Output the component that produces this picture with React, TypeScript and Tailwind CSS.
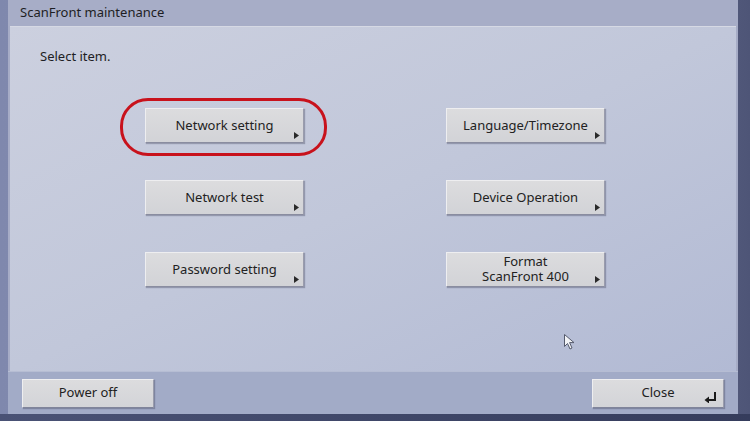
import React from "react";

const font = { fontFamily: '"Noto Sans", "Open Sans", Arial, sans-serif' };

function Tri() {
  return (
    <svg className="absolute right-[4px] bottom-[3px]" width="5" height="7" viewBox="0 0 5 7">
      <path d="M0 0 L5 3.5 L0 7 Z" fill="#2a2a2a" />
    </svg>
  );
}

function MenuButton({ children }: { children: React.ReactNode }) {
  return (
    <div className="relative w-[159px] h-[35px] bg-gradient-to-b from-[#dcdcde] to-[#d2d3d7] border-t border-l border-[#eeeef0] border-r border-b border-r-[#9a9cac] border-b-[#8a8da0] shadow-[1px_1px_1px_rgba(60,64,90,0.35)] flex items-center justify-center text-center text-[13px] leading-[15px] text-[#222]">
      <span>{children}</span>
      <Tri />
    </div>
  );
}

export default function App() {
  return (
    <div className="w-[750px] h-[421px] overflow-hidden bg-[#5d658a] flex flex-col" style={font}>
      <div className="flex flex-1 pl-[8px] pr-[12px] bg-gradient-to-r from-[#7f88ad] via-[#8f97b8] to-[#4e5577]">
        <div className="flex flex-col flex-1 bg-[#a6acc6]">
          <div className="h-[26px] flex items-center pl-[12px] text-[13px] text-[#1e1e24] bg-[#a7adc7]">
            ScanFront maintenance
          </div>
          <div className="relative flex-1 flex flex-col mx-[2px] border-t border-[#d6d9e4] bg-gradient-to-br from-[#ccd0df] via-[#c1c7da] to-[#b2bad4]">
            <div className="pl-[30px] pt-[20px] text-[13px] text-[#1e1e24]">Select item.</div>
            <div className="grid grid-cols-[159px_159px] gap-x-[142px] gap-y-[37px] pl-[135px] pt-[41px]">
              <div className="relative">
                <div className="absolute left-[-25px] top-[-10px] w-[207px] h-[58px] rounded-[28px] border-[3px] border-[#c8121c]" />
                <MenuButton>Network setting</MenuButton>
              </div>
              <MenuButton>Language/Timezone</MenuButton>
              <MenuButton>Network test</MenuButton>
              <MenuButton>Device Operation</MenuButton>
              <MenuButton>Password setting</MenuButton>
              <MenuButton>
                Format
                <br />
                ScanFront 400
              </MenuButton>
            </div>
            <svg className="absolute left-[554px] top-[307px]" width="11" height="16" viewBox="0 0 11 16">
              <path d="M0.5 0.5 L0.5 12.5 L3.5 9.5 L6 15 L8 14 L5.6 8.6 L10 8.6 Z" fill="#f2f3f6" stroke="#555a6c" strokeWidth="1" strokeLinejoin="round" />
            </svg>
          </div>
          <div className="h-[43px] flex items-center justify-between px-[14px] bg-[#a2abc7] border-t border-[#b6bdd3]">
            <div className="relative w-[132px] h-[29px] bg-gradient-to-b from-[#dcdcde] to-[#d3d4d8] border-t border-l border-[#eeeef0] border-r border-b border-r-[#9a9cac] border-b-[#80849a] shadow-[1px_1px_1px_rgba(60,64,90,0.35)] flex items-center justify-center text-[13px] text-[#222]">
              Power off
            </div>
            <div className="relative w-[132px] h-[29px] bg-gradient-to-b from-[#dcdcde] to-[#d3d4d8] border-t border-l border-[#eeeef0] border-r border-b border-r-[#9a9cac] border-b-[#80849a] shadow-[1px_1px_1px_rgba(60,64,90,0.35)] flex items-center justify-center text-[13px] text-[#222]">
              Close
              <svg className="absolute right-[6px] bottom-[4px]" width="13" height="11" viewBox="0 0 13 11">
                <path d="M11 0 L11 8 L4 8" fill="none" stroke="#1a1a1a" strokeWidth="2" />
                <path d="M0.5 8 L5 4.5 L5 11.5 Z" fill="#1a1a1a" />
              </svg>
            </div>
          </div>
        </div>
      </div>
      <div className="h-[7px] bg-gradient-to-r from-[#4a5275] to-[#353c5c]" />
    </div>
  );
}
